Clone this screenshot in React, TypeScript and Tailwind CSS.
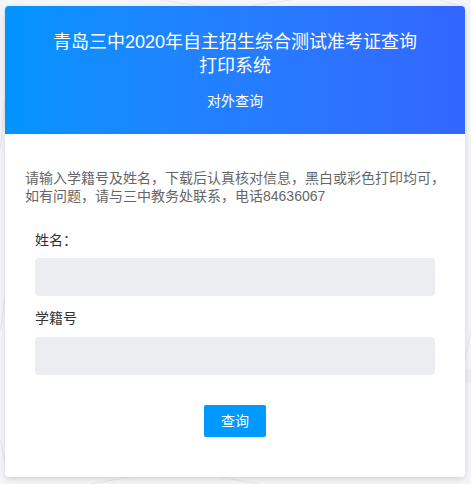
export default function App() {
  const font = { fontFamily: '"Liberation Sans", "Noto Sans CJK SC", sans-serif' };
  return (
    <div className="relative min-h-[484px] w-full overflow-hidden bg-[#f5f6fa] pt-[6px] pl-[5px]" style={font}>
      <svg className="absolute inset-0 h-full w-full" viewBox="0 0 471 484" preserveAspectRatio="none">
        <g stroke="#e6e8ee" strokeWidth="1" fill="none">
          <line x1="0" y1="150" x2="5" y2="100" />
          <line x1="0" y1="330" x2="5" y2="300" />
          <line x1="0" y1="440" x2="5" y2="460" />
          <line x1="160" y1="0" x2="200" y2="6" />
          <line x1="250" y1="6" x2="290" y2="0" />
          <line x1="440" y1="0" x2="460" y2="6" />
          <line x1="465" y1="360" x2="471" y2="330" />
          <line x1="90" y1="484" x2="130" y2="477" />
          <line x1="220" y1="477" x2="260" y2="484" />
        </g>
        <circle cx="471" cy="376" r="8" fill="#eceef2" />
      </svg>
      <div className="relative w-[460px] overflow-hidden rounded-[4px] bg-white shadow-[0_2px_6px_rgba(0,0,0,0.15)]">
        <div className="h-[128px] bg-gradient-to-r from-[#0094ff] to-[#3366ff] pt-[24px] text-center text-white">
          <h1 className="text-[18px] font-normal leading-[24px]">
            青岛三中2020年自主招生综合测试准考证查询
            <br />
            打印系统
          </h1>
          <p className="mt-[14px] text-[14px] leading-[18px]">对外查询</p>
        </div>
        <div className="px-[20px] pt-[35px] pb-[40px]">
          <p className="text-[14px] leading-[18px] text-[#666]">
            请输入学籍号及姓名，下载后认真核对信息，黑白或彩色打印均可，如有问题，请与三中教务处联系，电话84636067
          </p>
          <div className="px-[10px]">
            <label className="mt-[26px] block text-[14px] leading-[18px] text-[#333]">姓名：</label>
            <input className="mt-[9px] block h-[38px] w-full rounded-[4px] bg-[#ebedf0] px-3 text-[14px] outline-none" />
            <label className="mt-[13px] block text-[14px] leading-[18px] text-[#333]">学籍号</label>
            <input className="mt-[10px] block h-[38px] w-full rounded-[4px] bg-[#ebedf0] px-3 text-[14px] outline-none" />
          </div>
          <div className="mt-[30px] flex justify-center">
            <button className="h-[32px] w-[62px] rounded-[2px] bg-[#0099ff] text-[14px] text-white">查询</button>
          </div>
        </div>
      </div>
    </div>
  );
}
